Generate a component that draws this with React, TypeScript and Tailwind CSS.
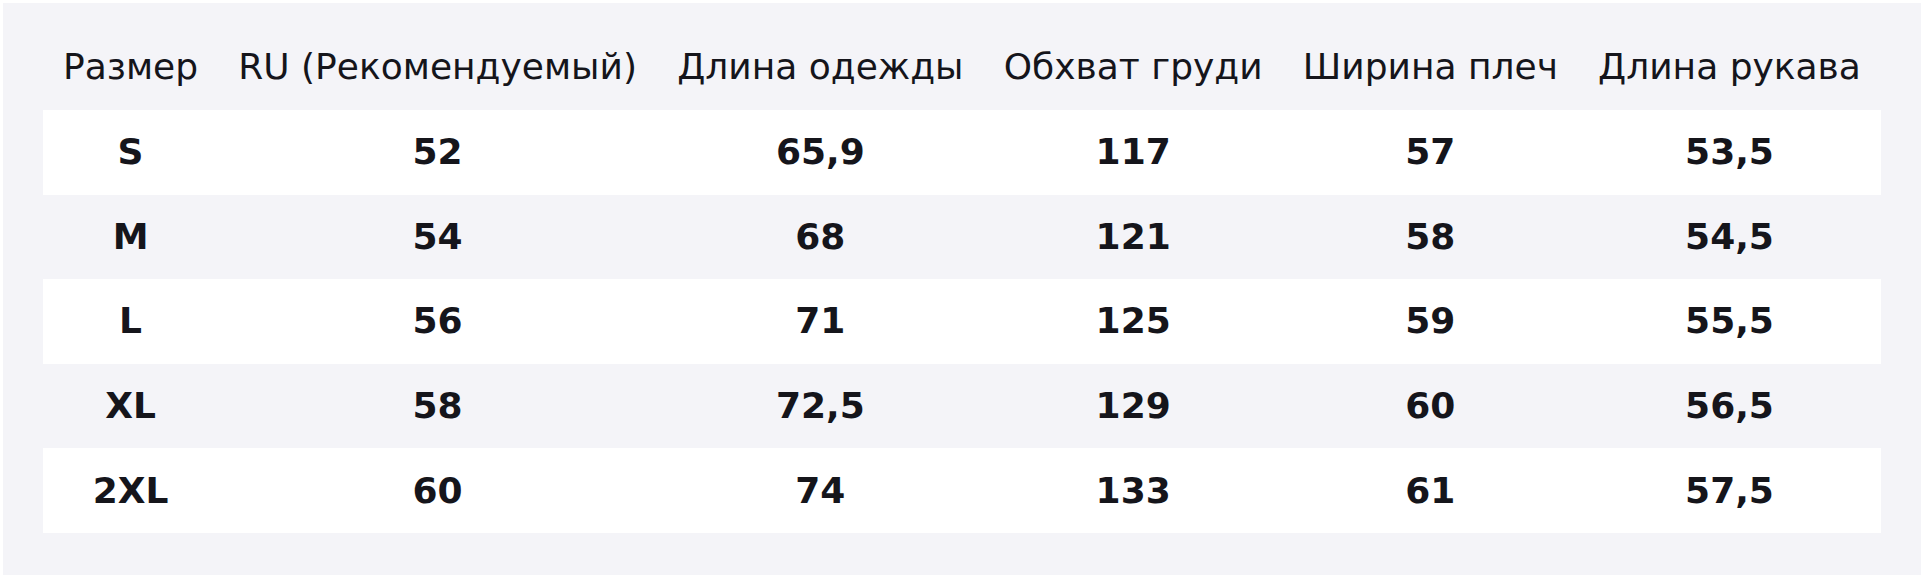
const headers = [
  'Размер',
  'RU (Рекомендуемый)',
  'Длина одежды',
  'Обхват груди',
  'Ширина плеч',
  'Длина рукава',
]

const rows = [
  ['S', '52', '65,9', '117', '57', '53,5'],
  ['M', '54', '68', '121', '58', '54,5'],
  ['L', '56', '71', '125', '59', '55,5'],
  ['XL', '58', '72,5', '129', '60', '56,5'],
  ['2XL', '60', '74', '133', '61', '57,5'],
]

export default function App() {
  return (
    <div className="bg-white p-[3px]" style={{ fontFamily: '"DejaVu Sans", Verdana, sans-serif' }}>
      <div className="bg-[#f4f4f8] px-[40px] pt-[43px] pb-[42px] text-[#15151b]">
        <table className="w-full border-collapse">
          <thead>
            <tr>
              {headers.map((h) => (
                <th
                  key={h}
                  className="whitespace-nowrap px-[20px] pt-0 pb-[22px] text-center text-[36px] font-normal leading-[42px]"
                >
                  {h}
                </th>
              ))}
            </tr>
          </thead>
          <tbody>
            {rows.map((r, i) => (
              <tr key={r[0]} className={i % 2 === 0 ? 'bg-white' : 'bg-transparent'}>
                {r.map((c, j) => (
                  <td
                    key={j}
                    className="whitespace-nowrap px-[20px] py-[21.3px] text-center text-[36px] font-bold leading-[42px]"
                  >
                    {c}
                  </td>
                ))}
              </tr>
            ))}
          </tbody>
        </table>
      </div>
    </div>
  )
}
